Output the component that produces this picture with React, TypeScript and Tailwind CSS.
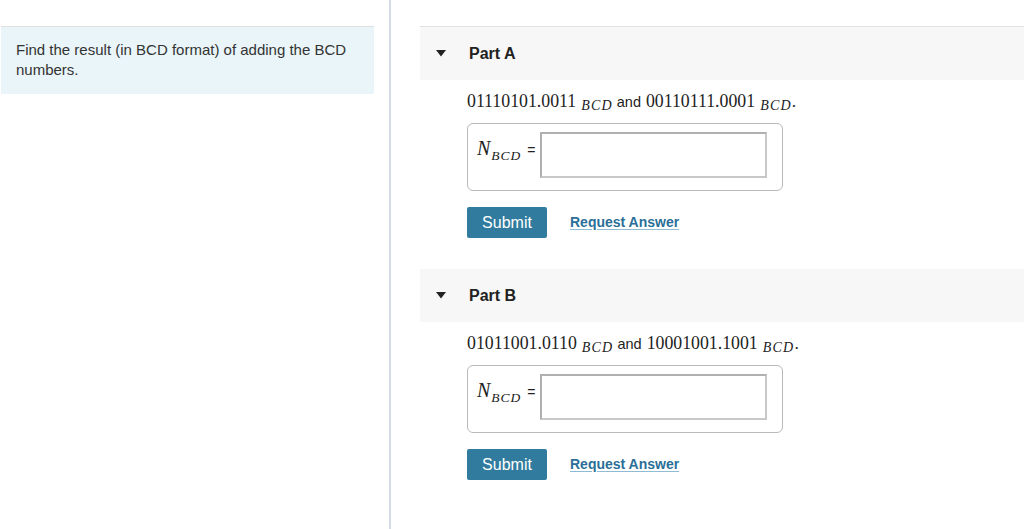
import React from "react";

const sans = { fontFamily: '"Liberation Sans", Arial, sans-serif' };
const serif = { fontFamily: '"Liberation Serif", "Times New Roman", serif' };

function Equation({ a, b }: { a: string; b: string }) {
  return (
    <div className="mt-[8px] flex h-[26px] items-baseline text-[#222]">
      <span style={serif} className="text-[17.8px] leading-[22px]">{a}</span>
      <span style={serif} className="relative top-[3px] ml-[5px] text-[14px] italic tracking-[1.2px]">BCD</span>
      <span className="ml-[4px] text-[14.5px]">and</span>
      <span style={serif} className="ml-[5px] text-[17.8px] leading-[22px]">{b}</span>
      <span style={serif} className="relative top-[3px] ml-[5px] text-[14px] italic tracking-[1.2px]">BCD</span>
      <span style={serif} className="text-[17.5px]">.</span>
    </div>
  );
}

function Part({ label, a, b, border }: { label: string; a: string; b: string; border?: boolean }) {
  return (
    <div>
      <div
        className={
          "flex items-center bg-[#f7f7f7] " +
          (border ? "h-[54px] border-t border-[#e2e2e2]" : "h-[53px]")
        }
      >
        <svg width="10" height="7" viewBox="0 0 10 7" className="ml-[16px]">
          <polygon points="0,0 10,0 5,6.5" fill="#222" />
        </svg>
        <span className="ml-[23px] text-[16px] font-bold text-[#222]">{label}</span>
      </div>
      <div className="pl-[47px]">
        <Equation a={a} b={b} />
        <div className="mt-[9px] flex h-[68px] w-[316px] rounded-[6px] border border-[#b9b9b9] pl-[9px] pt-[8px]">
          <div className="flex items-baseline pt-[6px] text-[#222]">
            <span style={serif} className="text-[20px] italic leading-[20px]">N</span>
            <span style={serif} className="relative top-[5px] ml-[1px] text-[13.5px] italic leading-[16px] tracking-[1px]">BCD</span>
            <span className="ml-[6px] text-[14px] leading-[16px]">=</span>
          </div>
          <div className="ml-[4px] h-[46px] w-[227px] border-2 border-[#c8c8c8] border-t-[#b0b0b0] border-l-[#b0b0b0] bg-white" />
        </div>
        <div className="mt-[16px] flex h-[31px] items-center">
          <button className="h-[31px] w-[80px] rounded-[2px] bg-[#317c9e] text-[16px] text-white">
            Submit
          </button>
          <a className="ml-[23px] text-[14px] font-bold text-[#2b6f98] underline decoration-[#8fbbd4] underline-offset-[2px]">
            Request Answer
          </a>
        </div>
      </div>
    </div>
  );
}

export default function App() {
  return (
    <div style={sans} className="flex h-[529px] w-[1024px] overflow-hidden bg-white">
      <div className="w-[389px] pt-[26px]">
        <div className="ml-[1px] w-[373px] border-t border-[#e0e0e0] bg-[#e9f5f8] px-[15px] pb-[14px] pt-[13px] text-[15px] leading-[20px] text-[#333]">
          Find the result (in BCD format) of adding the BCD numbers.
        </div>
      </div>
      <div className="w-[2px] bg-[#d3dbe5]" />
      <div className="flex-1 pl-[29px] pt-[26px]">
        <Part label="Part A" a="01110101.0011" b="00110111.0001" border />
        <div className="h-[31px]" />
        <Part label="Part B" a="01011001.0110" b="10001001.1001" />
      </div>
    </div>
  );
}
